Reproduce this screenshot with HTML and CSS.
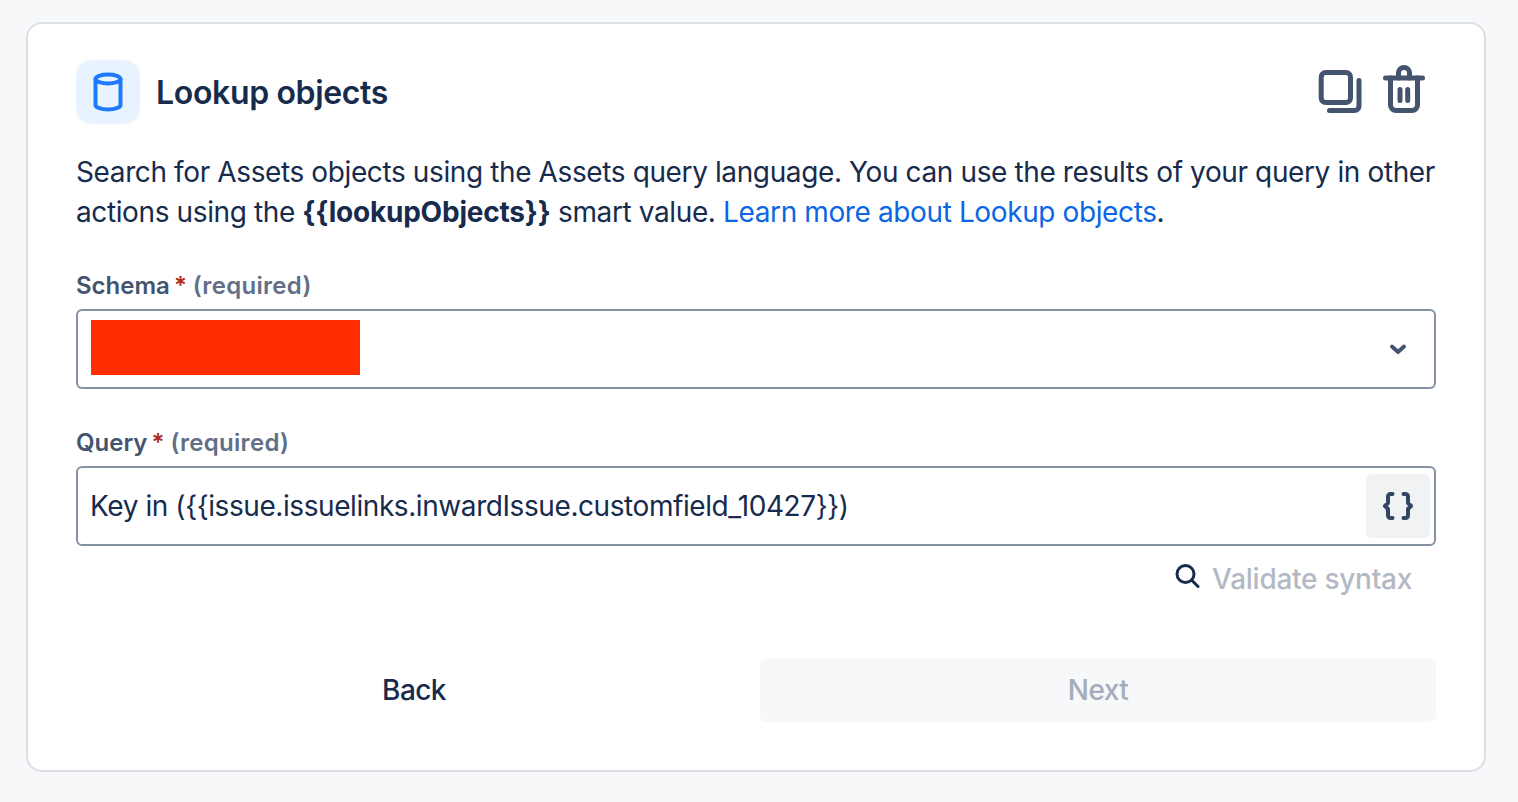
FILE: index.html
```html
<!DOCTYPE html>
<html lang="en">
<head>
<meta charset="utf-8">
<title>Lookup objects</title>
<link rel="stylesheet" href="styles.css">
</head>
<body>
<main class="card">
  <header class="header">
    <div class="title-group">
      <span class="title-icon">
        <svg width="32" height="40" viewBox="0 0 32 40" fill="none" stroke="#1D7AFC" stroke-width="4">
          <ellipse cx="16" cy="7" rx="12.500" ry="4.500"/>
          <path d="M3.500 7v26c0 2.500 5.600 4.500 12.500 4.500s12.500-2 12.500-4.500V7"/>
        </svg>
      </span>
      <h1 class="title">Lookup objects</h1>
    </div>
    <div class="actions">
      <svg width="44" height="44" viewBox="0 0 44 44" fill="none" stroke="#44546F" stroke-width="5" stroke-linecap="round" stroke-linejoin="round">
        <rect x="3.200" y="2.500" width="29.300" height="30" rx="4.500"/>
        <path d="M41 10.500V36a4.500 4.500 0 0 1-4.500 4.500H11.500"/>
      </svg>
      <svg width="44" height="54" viewBox="0 0 44 54" fill="none" stroke="#44546F" stroke-width="5" stroke-linecap="round" stroke-linejoin="round">
        <path d="M3.500 13h37"/>
        <path d="M16.500 13V8a5.500 5.500 0 0 1 11 0v5"/>
        <path d="M8.500 13v27a5.500 5.500 0 0 0 5.500 5.500h16a5.500 5.500 0 0 0 5.500-5.500V13"/>
        <path d="M18 24.500v11M25.700 24.500v11"/>
      </svg>
    </div>
  </header>
  <p class="desc">Search for Assets objects using the Assets query language. You can use the results of your query in other actions using the <strong>{{lookupObjects}}</strong> smart value. <a class="link" href="#">Learn more about Lookup objects</a>.</p>
  <div class="field">
    <div class="label"><span class="label-name">Schema</span><span class="star">*</span><span class="req">(required)</span></div>
    <div class="control control-select">
      <span class="redacted"></span>
      <svg width="18" height="12" viewBox="0 0 18 12" fill="none" stroke="#44546F" stroke-width="4" stroke-linecap="round" stroke-linejoin="round"><path d="M3 3.500l6 5.500 6-5.500"/></svg>
    </div>
  </div>
  <div class="field">
    <div class="label"><span class="label-name">Query</span><span class="star">*</span><span class="req">(required)</span></div>
    <div class="control control-input">
      <span class="value">Key in ({{issue.issuelinks.inwardIssue.customfield_10427}})</span>
      <span class="smart">
        <svg width="32" height="30" viewBox="0 0 32 30" fill="none" stroke="#344563" stroke-width="4" stroke-linecap="round" stroke-linejoin="round">
          <path d="M10.500 3H8.500A2.500 2.500 0 0 0 6 5.500V12l-3 3 3 3v6.500A2.500 2.500 0 0 0 8.500 27h2"/>
          <path d="M21.500 3h2A2.500 2.500 0 0 1 26 5.500V12l3 3-3 3v6.500a2.500 2.500 0 0 1-2.500 2.500h-2"/>
        </svg>
      </span>
    </div>
  </div>
  <div class="validate">
    <svg class="validate-icon" width="26" height="26" viewBox="0 0 26 26" fill="none" stroke="#172B4D" stroke-width="3" stroke-linecap="round"><circle cx="11.500" cy="11" r="8.500"/><path d="M18 17.500l6 6"/></svg>
    <span class="validate-text">Validate syntax</span>
  </div>
  <div class="buttons">
    <button class="btn btn-back" type="button">Back</button>
    <button class="btn btn-next" type="button" disabled>Next</button>
  </div>
</main>
</body>
</html>
```

FILE: styles.css
```css
* { box-sizing: border-box; }
html, body { margin: 0; height: 100%; }
body {
  background: #F7F8F9;
  font-family: Inter, "Liberation Sans", sans-serif;
  color: #172B4D;
  padding: 22px 32px 30px 26px;
  overflow: hidden;
}
.card {
  width: 1460px;
  height: 750px;
  background: #fff;
  border: 2px solid #DCDFE4;
  border-radius: 16px;
  padding: 36px 48px 0;
}
.header { display: flex; justify-content: space-between; align-items: center; height: 64px; }
.title-group { display: flex; align-items: center; gap: 16px; }
.title-icon {
  width: 64px; height: 64px; border-radius: 16px; background: #E9F2FF;
  display: flex; align-items: center; justify-content: center;
}
.title { margin: 0; padding-top: 2px; font-size: 32px; font-weight: 600; line-height: 40px; letter-spacing: -0.35px; }
.actions { display: flex; align-items: center; gap: 20px; padding-right: 10px; }
.desc { margin: 28px 0 0; font-size: 28px; line-height: 40px; letter-spacing: -0.385px; }
.desc strong { font-weight: 700; letter-spacing: -0.22px; }
.link { color: #0C66E4; text-decoration: none; }
.field { margin-top: 37px; }
.label { display: flex; align-items: center; font-size: 24px; line-height: 32px; height: 32px; padding-top: 2px; font-weight: 600; color: #44546F; }
.star { color: #AE2E24; margin-left: 4px; }
.req { color: #626F86; margin-left: 6px; letter-spacing: 0.3px; }
.control {
  margin-top: 8px; height: 80px; width: 1360px;
  border: 2px solid #8590A2; border-radius: 6px; background: #fff;
  display: flex; align-items: center; justify-content: space-between;
}
.control-select { padding: 0 27px 0 13px; }
.control-input { padding: 0 4px 0 12px; font-size: 28px; letter-spacing: -0.42px; }
.redacted { width: 269px; height: 55px; background: #FF2D00; margin-bottom: 4px; }
.smart {
  width: 64px; height: 64px; border-radius: 6px; background: #F1F2F4;
  display: flex; align-items: center; justify-content: center;
}
.validate { display: flex; justify-content: flex-end; align-items: center; gap: 12px; margin-top: 17px; padding-right: 24px; height: 32px; }
.validate-icon { margin-bottom: 6px; }
.validate-text { font-size: 28px; font-weight: 500; color: #B3B9C4; letter-spacing: -0.27px; }
.buttons { display: flex; gap: 8px; margin-top: 63px; }
.btn {
  flex: 1; height: 64px; border: 0; border-radius: 6px;
  font-family: inherit; font-size: 28px; font-weight: 500; background: transparent; padding: 0; letter-spacing: -0.55px;
}
.btn-back { color: #172B4D; }
.btn-next { color: #A5ADBA; background: #F7F8F9; }
```
